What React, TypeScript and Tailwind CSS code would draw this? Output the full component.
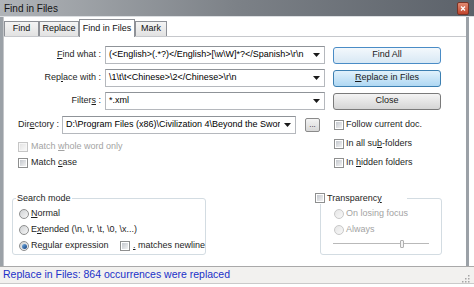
import type { ReactNode } from 'react'

type BtnKind = 'default' | 'hover' | 'normal'

function U({ children }: { children: ReactNode }) {
  return <span className="underline decoration-1 underline-offset-[1px]">{children}</span>
}

function Arrow() {
  return (
    <svg width="7" height="4" viewBox="0 0 7 4">
      <path d="M0 0h7L3.5 4z" fill="#1a1a1a" />
    </svg>
  )
}

function Combo({ value, className }: { value: string; className: string }) {
  return (
    <div
      className={`flex h-[18px] items-center border border-[#b5b8bd] border-t-[#8f9398] bg-white ${className}`}
    >
      <span className="min-w-0 flex-1 overflow-hidden whitespace-nowrap pl-[3px] text-[9px] text-black">
        {value}
      </span>
      <span className="flex w-[15px] shrink-0 justify-center">
        <Arrow />
      </span>
    </div>
  )
}

function Btn({ kind, children }: { kind: BtnKind; children: ReactNode }) {
  const look =
    kind === 'default'
      ? 'border-[#4a8cc6] bg-gradient-to-b from-[#f3f8fc] to-[#d8e8f4]'
      : kind === 'hover'
        ? 'border-[#3c7fb1] bg-gradient-to-b from-[#e1f1fb] to-[#afd8f3]'
        : 'border-[#7a7a7a] bg-gradient-to-b from-[#f4f4f4] to-[#d5d5d5]'
  return (
    <div
      className={`ml-[8px] flex h-[17px] w-[108px] items-center justify-center rounded-[3px] border text-[9px] text-[#1a1a1a] ${look}`}
    >
      {children}
    </div>
  )
}

function Check({ disabled }: { disabled?: boolean }) {
  return (
    <span
      className={`flex h-[10px] w-[10px] shrink-0 items-center justify-center border ${
        disabled ? 'border-[#c6c6c6] bg-[#f6f6f6]' : 'border-[#8e8f8f] bg-white'
      }`}
    >
      <span
        className={`h-[6px] w-[6px] bg-gradient-to-br ${
          disabled ? 'from-[#e4e4e4] to-[#f7f7f7]' : 'from-[#c4c8ce] to-[#f2f2f2]'
        }`}
      />
    </span>
  )
}

function Radio({ checked, disabled }: { checked?: boolean; disabled?: boolean }) {
  return (
    <span
      className={`flex h-[10px] w-[10px] shrink-0 items-center justify-center rounded-full border bg-gradient-to-br ${
        disabled
          ? 'border-[#c8c8c8] from-[#e6e6e6] to-[#f8f8f8]'
          : 'border-[#8e8f8f] from-[#cfd1d3] to-[#f7f7f7]'
      }`}
    >
      {checked && (
        <span className="h-[5px] w-[5px] rounded-full bg-gradient-to-br from-[#79b3e6] to-[#0e3b7c]" />
      )}
    </span>
  )
}

function Tab({ children, active, w }: { children: ReactNode; active?: boolean; w: string }) {
  return (
    <div
      className={`flex items-center justify-center border border-b-0 border-[#8e9197] text-[9px] text-[#111] ${w} ${
        active ? '-mb-px h-[18px] bg-white' : 'h-[15px] bg-gradient-to-b from-[#f4f4f4] to-[#e2e2e2]'
      }`}
    >
      {children}
    </div>
  )
}

export default function App() {
  return (
    <div className="flex h-[287px] w-[474px] flex-col overflow-hidden bg-white font-['Liberation_Sans',Arial,sans-serif] text-[#1e1e1e]">
      {/* title bar */}
      <div className="flex h-[16px] items-center justify-between bg-gradient-to-r from-[#b0b4b8] via-[#7c8187] to-[#5c626a] pl-[4px] pr-[5px]">
        <span className="text-[10px] text-[#141414]">Find in Files</span>
        <span className="flex h-[13px] w-[12px] items-center justify-center rounded-[2px] border border-[#7a3426] bg-gradient-to-b from-[#e08a72] to-[#c2432b]">
          <svg width="6" height="5" viewBox="0 0 6 5">
            <path d="M1 0.5l4 4M5 0.5l-4 4" stroke="#fff" strokeWidth="1.3" />
          </svg>
        </span>
      </div>
      <div className="h-px bg-[#dcdfe2]" />

      <div className="flex h-[249px]">
        <div className="w-[3px] bg-[#9ba1a7]" />
        <div className="flex flex-1 flex-col border-l border-[#c4c6c9]">
          {/* tabs */}
          <div className="flex h-[20px] items-end border-b border-[#c6c8cc]">
            <Tab w="w-[35px]">Find</Tab>
            <Tab w="w-[40px]">Replace</Tab>
            <Tab w="w-[56px]" active>
              Find in Files
            </Tab>
            <Tab w="w-[32px]">Mark</Tab>
          </div>

          <div className="flex flex-1 flex-col whitespace-nowrap text-[9px]">
            <div className="mt-[9px] flex h-[18px] items-center">
              <span className="w-[97px] text-right">
                <U>F</U>ind what :
              </span>
              <Combo className="ml-[4px] w-[220px]" value={'(<English>(.*?)</English>[\\w\\W]*?</Spanish>\\r\\n'} />
              <Btn kind="default">Find All</Btn>
            </div>
            <div className="mt-[5px] flex h-[18px] items-center">
              <span className="w-[97px] text-right">
                Rep<U>l</U>ace with :
              </span>
              <Combo className="ml-[4px] w-[220px]" value={'\\1\\t\\t<Chinese>\\2</Chinese>\\r\\n'} />
              <Btn kind="hover">
                <U>R</U>eplace in Files
              </Btn>
            </div>
            <div className="mt-[5px] flex h-[18px] items-center">
              <span className="w-[97px] text-right">
                Filter<U>s</U> :
              </span>
              <Combo className="ml-[4px] w-[220px]" value="*.xml" />
              <Btn kind="normal">Close</Btn>
            </div>
            <div className="mt-[6px] flex h-[18px] items-center pl-[14px]">
              <span className="w-[44px]">
                Dir<U>e</U>ctory :
              </span>
              <Combo className="w-[234px]" value={'D:\\Program Files (x86)\\Civilization 4\\Beyond the Sworc'} />
              <div className="ml-[9px] flex h-[14px] w-[15px] items-end justify-center rounded-[2px] border border-[#8a8a8a] bg-gradient-to-b from-[#f4f4f4] to-[#d8d8d8] pb-[2px] text-[8px] leading-[8px]">
                ...
              </div>
              <div className="ml-[14px] flex items-center gap-[2px]">
                <Check />
                <span>Follow current doc.</span>
              </div>
            </div>

            <div className="flex">
              <div className="ml-[14px] mt-[5px] flex w-[316px] flex-col">
                <div className="flex h-[16px] items-center gap-[3px] text-[#a3a3a3]">
                  <Check disabled />
                  <span>
                    Match <U>w</U>hole word only
                  </span>
                </div>
                <div className="flex h-[16px] items-center gap-[3px]">
                  <Check />
                  <span>
                    Match <U>c</U>ase
                  </span>
                </div>
              </div>
              <div className="mt-[2px] flex flex-col gap-[3px]">
                <div className="flex h-[16px] items-center gap-[2px]">
                  <Check />
                  <span>
                    In all su<U>b</U>-folders
                  </span>
                </div>
                <div className="flex h-[16px] items-center gap-[2px]">
                  <Check />
                  <span>
                    In <U>h</U>idden folders
                  </span>
                </div>
              </div>
            </div>

            <div className="mt-[21px] flex items-start">
              <fieldset className="ml-[8px] h-[63px] w-[193px] rounded-[3px] border border-[#d3dce2]">
                <legend className="ml-[3px] px-[1px] leading-[12px]">Search mode</legend>
                <div className="ml-[6px] mt-[2px] flex flex-col">
                  <div className="flex h-[16px] items-center gap-[2px]">
                    <Radio />
                    <span>
                      <U>N</U>ormal
                    </span>
                  </div>
                  <div className="flex h-[16px] items-center gap-[2px]">
                    <Radio />
                    <span>
                      E<U>x</U>tended (\n, \r, \t, \0, \x...)
                    </span>
                  </div>
                  <div className="flex h-[16px] items-center gap-[2px]">
                    <Radio checked />
                    <span className="w-[87px]">
                      Re<U>g</U>ular expression
                    </span>
                    <Check />
                    <span className="ml-px">
                      <U>.</U> matches newline
                    </span>
                  </div>
                </div>
              </fieldset>

              <fieldset className="ml-[114px] h-[63px] w-[122px] rounded-[3px] border border-[#d3dce2]">
                <legend className="-ml-[6px] w-[92px] leading-[12px]">
                  <span className="flex items-center gap-[2px]">
                    <Check />
                    <span>
                      Transparenc<U>y</U>
                    </span>
                  </span>
                </legend>
                <div className="ml-[13px] mt-[2px] flex flex-col text-[#a3a3a3]">
                  <div className="flex h-[16px] items-center gap-[2px]">
                    <Radio disabled />
                    <span>On losing focus</span>
                  </div>
                  <div className="flex h-[16px] items-center gap-[2px]">
                    <Radio disabled />
                    <span>Always</span>
                  </div>
                  <div className="-ml-px flex h-[12px] items-center">
                    <div className="relative h-[8px] w-[96px]">
                      <div className="absolute left-0 right-0 top-[3px] h-px bg-[#b9b9b9]" />
                      <div className="absolute left-[67px] top-0 h-[8px] w-[4px] rounded-[1px] border border-[#b0b0b0] bg-[#f4f4f4]" />
                    </div>
                  </div>
                </div>
              </fieldset>
            </div>
          </div>
        </div>
        <div className="w-[3px] bg-[#9ba1a7]" />
        <div className="w-[5px] bg-white" />
      </div>

      {/* status bar */}
      <div className="flex h-[17px] items-center justify-between border-t border-[#a9a9a9] bg-[#f2f1ef] pl-[3px]">
        <span className="text-[10.5px] text-[#2030c8]">Replace in Files: 864 occurrences were replaced</span>
        <svg width="8" height="8" viewBox="0 0 8 8" className="mr-[4px] self-end">
          <rect x="6" y="0" width="1.5" height="1.5" fill="#a6a6a6" />
          <rect x="3" y="3" width="1.5" height="1.5" fill="#a6a6a6" />
          <rect x="6" y="3" width="1.5" height="1.5" fill="#a6a6a6" />
          <rect x="0" y="6" width="1.5" height="1.5" fill="#a6a6a6" />
          <rect x="3" y="6" width="1.5" height="1.5" fill="#a6a6a6" />
          <rect x="6" y="6" width="1.5" height="1.5" fill="#a6a6a6" />
        </svg>
      </div>
      <div className="h-[4px] border-t border-[#cacaca] bg-white" />
    </div>
  )
}
